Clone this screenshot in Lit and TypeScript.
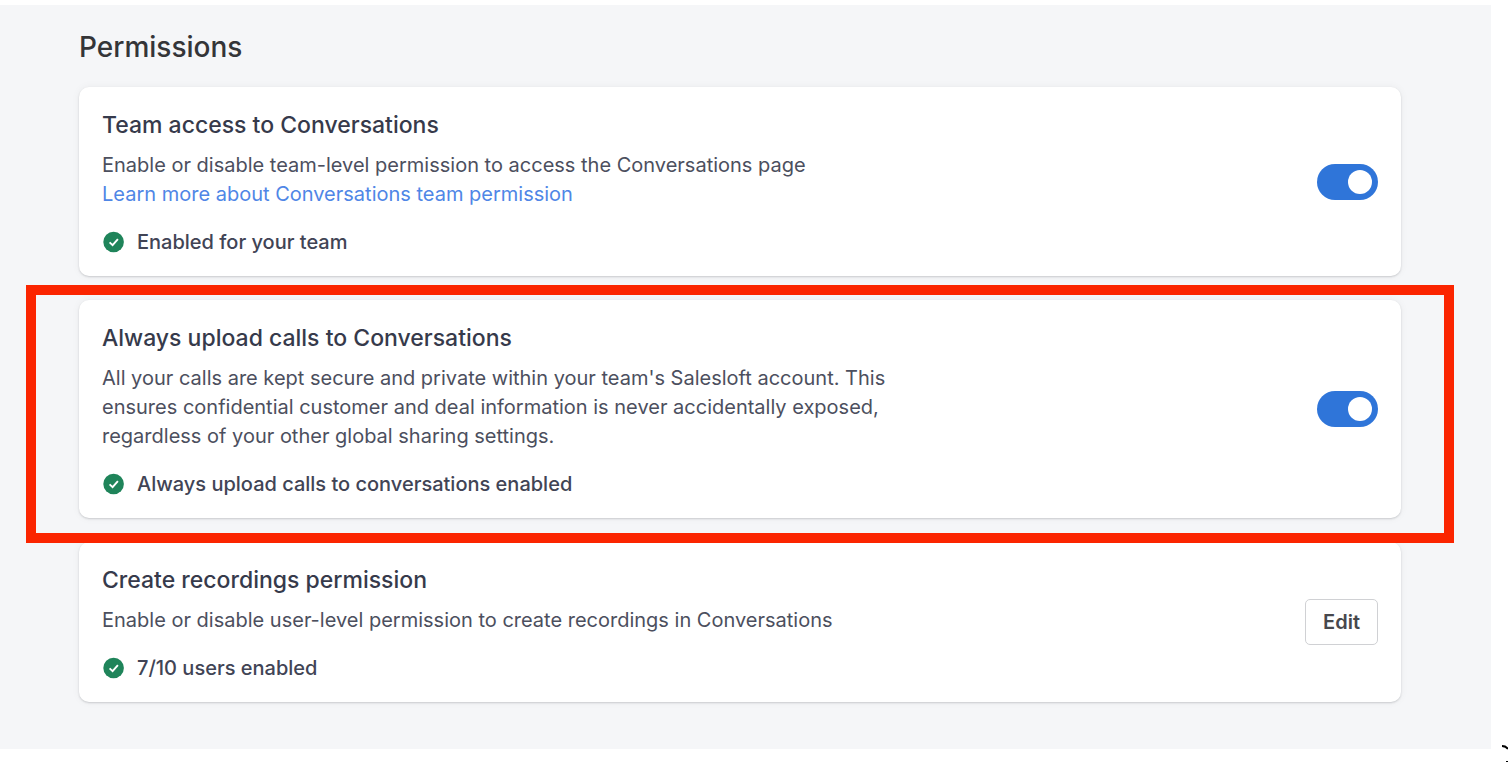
import { LitElement, html, css, nothing } from "lit";
import { customElement, property } from "lit/decorators.js";

@customElement("permission-card")
class PermissionCard extends LitElement {
  @property() heading = "";
  @property() status = "";
  @property({ type: Boolean }) highlighted = false;

  static styles = css`
    :host {
      display: block;
      position: relative;
    }
    .card {
      display: flex;
      align-items: center;
      justify-content: space-between;
      gap: 24px;
      padding: 20px 23px;
      border-radius: 10px;
      background: #ffffff;
      box-shadow: 0 1px 2px rgba(30, 34, 44, 0.18), 0 0 8px rgba(30, 34, 44, 0.05);
    }
    .body {
      max-width: 800px;
    }
    .heading {
      margin: 0 0 8px;
      font-size: 23px;
      line-height: 36px;
      font-weight: 500;
      color: #363a4b;
    }
    .description {
      font-size: 20px;
      line-height: 29px;
      color: #4c4f5e;
    }
    .status {
      display: flex;
      align-items: center;
      gap: 12px;
      margin: 19px 0 0;
      font-size: 20px;
      line-height: 28px;
      font-weight: 500;
      color: #414455;
    }
    .check {
      width: 23px;
      height: 22px;
      flex: none;
    }
    .frame {
      position: absolute;
      inset: -15px -53px -25px;
      border: 10px solid #fb2500;
      pointer-events: none;
      z-index: 1;
    }
  `;

  render() {
    return html`
      <section class="card">
        <div class="body">
          <h2 class="heading">${this.heading}</h2>
          <div class="description"><slot></slot></div>
          <p class="status">
            <svg class="check" viewBox="0 0 23 22" aria-hidden="true">
              <circle cx="11.6" cy="11" r="10.3" fill="#1f845a" />
              <path d="M7.6 11.4 L10.6 14.2 L15.9 8.2" fill="none" stroke="#fff" stroke-width="1.9" />
            </svg>
            <span>${this.status}</span>
          </p>
        </div>
        <slot name="control"></slot>
      </section>
      ${this.highlighted ? html`<div class="frame"></div>` : nothing}
    `;
  }
}

@customElement("app-root")
class AppRoot extends LitElement {
  static styles = css`
    :host {
      display: block;
      position: relative;
      min-height: 100vh;
      overflow: hidden;
      box-sizing: border-box;
      padding: 5px 17px 14px 0;
      background: #ffffff;
      font-family: Inter, "Liberation Sans", sans-serif;
    }
    .panel {
      padding: 24px 90px 47px 79px;
      background: #f5f6f8;
    }
    .title {
      margin: 0 0 22px;
      font-size: 28px;
      line-height: 36px;
      font-weight: 500;
      color: #343538;
    }
    .list {
      display: grid;
      gap: 24px;
    }
    .link {
      color: #4f86e6;
      text-decoration: none;
    }
    .switch {
      appearance: none;
      flex: none;
      display: flex;
      align-items: center;
      width: 61px;
      height: 36px;
      margin: 0;
      padding: 0 6px;
      box-sizing: border-box;
      border-radius: 18px;
      background: #c1c7d0;
      cursor: pointer;
    }
    .switch::before {
      content: "";
      width: 24px;
      height: 24px;
      border-radius: 50%;
      background: #ffffff;
    }
    .switch:checked {
      justify-content: flex-end;
      background: #2f75d9;
    }
    .edit {
      flex: none;
      margin: 0;
      padding: 8px 17px;
      border: 1px solid #d0d1d4;
      border-radius: 5px;
      background: #ffffff;
      font: 600 20px/28px Inter, "Liberation Sans", sans-serif;
      color: #47484d;
      cursor: pointer;
    }
    .corner {
      position: absolute;
      right: 0;
      bottom: 0;
      width: 8px;
      height: 20px;
    }
  `;

  render() {
    return html`
      <main class="panel">
        <h1 class="title">Permissions</h1>
        <div class="list">
          <permission-card heading="Team access to Conversations" status="Enabled for your team">
            Enable or disable team-level permission to access the Conversations page<br />
            <a class="link" href="#team-permission">Learn more about Conversations team permission</a>
            <input slot="control" class="switch" type="checkbox" role="switch" aria-label="Team access to Conversations" checked />
          </permission-card>
          <permission-card
            heading="Always upload calls to Conversations"
            status="Always upload calls to conversations enabled"
            highlighted
          >
            All your calls are kept secure and private within your team's Salesloft account. This ensures confidential
            customer and deal information is never accidentally exposed, regardless of your other global sharing settings.
            <input slot="control" class="switch" type="checkbox" role="switch" aria-label="Always upload calls to Conversations" checked />
          </permission-card>
          <permission-card heading="Create recordings permission" status="7/10 users enabled">
            Enable or disable user-level permission to create recordings in Conversations
            <button slot="control" class="edit" type="button">Edit</button>
          </permission-card>
        </div>
      </main>
      <svg class="corner" viewBox="0 0 8 20" aria-hidden="true">
        <path d="M2 3 Q6 3 8 6" fill="none" stroke="#000" stroke-width="2" />
        <path d="M6 18h2v2h-2z" fill="#000" />
      </svg>
    `;
  }
}
